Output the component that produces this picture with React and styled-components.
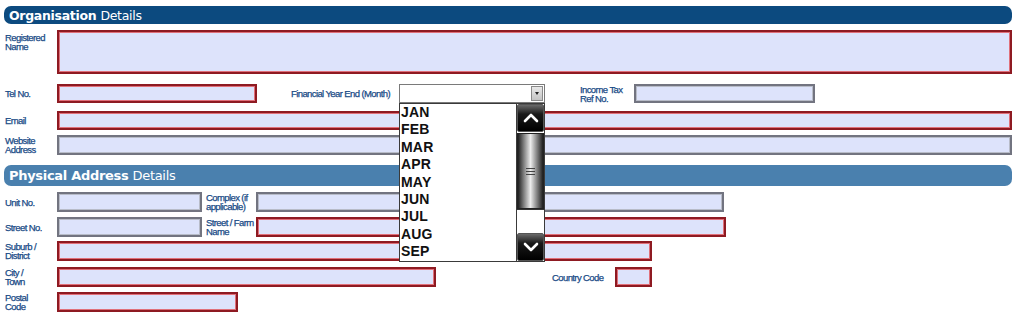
import styled, { createGlobalStyle } from "styled-components";

const GlobalStyle = createGlobalStyle`
  html, body {
    margin: 0;
    padding: 0;
    background: #ffffff;
  }
  body {
    font-family: "Liberation Sans", Arial, sans-serif;
  }
`;

const months = ["JAN", "FEB", "MAR", "APR", "MAY", "JUN", "JUL", "AUG", "SEP"];

const Page = styled.div`
  width: 1024px;
  height: 319px;
  overflow: hidden;
  padding-top: 6px;
  box-sizing: border-box;
  display: flex;
  flex-direction: column;
`;

const SectionHeader = styled.div`
  margin: ${(p) => p.$top || 0}px 0 0 4px;
  width: 1008px;
  height: ${(p) => p.$height}px;
  background: ${(p) => p.$color};
  border-radius: 7px;
  display: flex;
  align-items: center;
  padding-left: 5px;
  box-sizing: border-box;
  color: #ffffff;
  font-family: "DejaVu Sans", Verdana, sans-serif;
  font-size: ${(p) => p.$size || 12.5}px;
  letter-spacing: -0.3px;

  b {
    font-weight: 700;
    margin-right: 4px;
  }
`;

const Row = styled.div`
  display: flex;
  align-items: ${(p) => (p.$top ? "flex-start" : "center")};
  margin-top: ${(p) => p.$gap}px;
  padding-left: 5px;
`;

const Label = styled.div`
  width: ${(p) => p.$w}px;
  margin-left: ${(p) => p.$ml || 0}px;
  padding-top: ${(p) => p.$pt || 0}px;
  flex-shrink: 0;
  color: #184a86;
  font-family: "Liberation Sans", Arial, sans-serif;
  font-size: 9.5px;
  line-height: 9px;
  letter-spacing: -0.6px;
  -webkit-text-stroke: 0.25px #184a86;
  white-space: ${(p) => (p.$nowrap ? "nowrap" : "normal")};
`;

const Field = styled.div`
  width: ${(p) => p.$w}px;
  height: ${(p) => p.$h || 20}px;
  margin-left: ${(p) => p.$ml || 0}px;
  flex-shrink: 0;
  box-sizing: border-box;
  background: #dde3fb;
  border: 2px solid ${(p) => (p.$required ? "#8e1a22" : "#727480")};
  box-shadow: ${(p) =>
    p.$required ? "inset 0 0 0 1px #e0707a" : "inset 0 0 0 1px #b8bcc8"};
`;

const SelectWrap = styled.div`
  position: relative;
  width: 146px;
  height: 19px;
  margin-left: ${(p) => p.$ml}px;
  flex-shrink: 0;
`;

const SelectBox = styled.div`
  width: 100%;
  height: 100%;
  box-sizing: border-box;
  background: #ffffff;
  border: 1px solid #7a7a7a;
  display: flex;
  justify-content: flex-end;
  padding: 1px;
`;

const SelectArrow = styled.div`
  width: 12px;
  height: 100%;
  box-sizing: border-box;
  background: linear-gradient(#e8e8e8, #c4c4c4);
  border: 1px solid #8a8a8a;
  display: flex;
  align-items: center;
  justify-content: center;

  &::after {
    content: "";
    border-left: 2.5px solid transparent;
    border-right: 2.5px solid transparent;
    border-top: 3px solid #222;
  }
`;

const DropList = styled.div`
  position: absolute;
  top: 19px;
  left: 0;
  width: 146px;
  height: 159px;
  box-sizing: border-box;
  background: #ffffff;
  border: 1px solid #3a3a3a;
  display: flex;
  z-index: 5;
`;

const Options = styled.div`
  flex: 1;
  padding-top: 0;
`;

const Option = styled.div`
  height: 17.4px;
  line-height: 17.4px;
  font-family: "Liberation Sans", Arial, sans-serif;
  font-weight: 700;
  font-size: 14px;
  letter-spacing: 0.2px;
  color: #111111;
  padding-left: 1px;
`;

const Scrollbar = styled.div`
  width: 27px;
  display: flex;
  flex-direction: column;
  border-left: 1px solid #3a3a3a;
`;

const ScrollButton = styled.div`
  height: 28px;
  box-sizing: border-box;
  border: 1px solid #555;
  border-radius: 2px;
  background: linear-gradient(#6a6a6a 0%, #1a1a1a 35%, #000 100%);
  display: flex;
  align-items: center;
  justify-content: center;
`;

const Thumb = styled.div`
  height: 76px;
  box-sizing: border-box;
  margin-top: 1px;
  border: 1px solid #222;
  background: linear-gradient(
    90deg,
    #1e1e1e 0%,
    #7a7a7a 22%,
    #ececec 50%,
    #7a7a7a 78%,
    #1e1e1e 100%
  );
  display: flex;
  flex-direction: column;
  align-items: center;
  justify-content: center;
  gap: 2px;

  span {
    width: 9px;
    height: 1px;
    background: #444;
  }
`;

const Track = styled.div`
  flex: 1;
  background: #ffffff;
  border-top: 1px solid #333;
`;

const Chevron = ({ up }) => (
  <svg width="16" height="10" viewBox="0 0 16 10">
    <polyline
      points={up ? "2,8 8,2 14,8" : "2,2 8,8 14,2"}
      fill="none"
      stroke="#ffffff"
      strokeWidth="2.6"
      strokeLinecap="round"
      strokeLinejoin="round"
    />
  </svg>
);

const App = () => {
  return (
    <>
      <GlobalStyle />
      <Page>
        <SectionHeader $color="#0c4a7f" $height={18}>
          <b>Organisation</b>Details
        </SectionHeader>

        <Row $gap={6} $top>
          <Label $w={52} $pt={3}>
            Registered Name
          </Label>
          <Field $w={955} $h={44} $required />
        </Row>

        <Row $gap={10}>
          <Label $w={52}>Tel No.</Label>
          <Field $w={200} $h={19} $required />
          <Label $w={104} $ml={34} $nowrap>
            Financial Year End (Month)
          </Label>
          <SelectWrap $ml={4}>
            <SelectBox>
              <SelectArrow />
            </SelectBox>
            <DropList>
              <Options>
                {months.map((m) => (
                  <Option key={m}>{m}</Option>
                ))}
              </Options>
              <Scrollbar>
                <ScrollButton>
                  <Chevron up />
                </ScrollButton>
                <Thumb>
                  <span />
                  <span />
                  <span />
                </Thumb>
                <Track />
                <ScrollButton>
                  <Chevron />
                </ScrollButton>
              </Scrollbar>
            </DropList>
          </SelectWrap>
          <Label $w={50} $ml={35}>
            Income Tax Ref No.
          </Label>
          <Field $w={181} $h={19} $ml={4} />
        </Row>

        <Row $gap={8}>
          <Label $w={52}>Email</Label>
          <Field $w={955} $h={19} $required />
        </Row>

        <Row $gap={5}>
          <Label $w={52}>Website Address</Label>
          <Field $w={955} $h={20} />
        </Row>

        <SectionHeader $color="#4a80ae" $height={21} $top={10} $size={13}>
          <b>Physical Address</b>Details
        </SectionHeader>

        <Row $gap={6}>
          <Label $w={52}>Unit No.</Label>
          <Field $w={145} />
          <Label $w={50} $ml={4}>
            Complex (if applicable)
          </Label>
          <Field $w={468} />
        </Row>

        <Row $gap={5}>
          <Label $w={52}>Street No.</Label>
          <Field $w={145} />
          <Label $w={50} $ml={4} $nowrap>
            Street / Farm
            <br />
            Name
          </Label>
          <Field $w={470} $required />
        </Row>

        <Row $gap={4}>
          <Label $w={52}>
            Suburb /<br />
            District
          </Label>
          <Field $w={595} $required />
        </Row>

        <Row $gap={6}>
          <Label $w={52}>
            City /<br />
            Town
          </Label>
          <Field $w={379} $required />
          <Label $w={60} $ml={116} $nowrap>
            Country Code
          </Label>
          <Field $w={37} $ml={3} $required />
        </Row>

        <Row $gap={5}>
          <Label $w={52}>
            Postal
            <br />
            Code
          </Label>
          <Field $w={181} $required />
        </Row>
      </Page>
    </>
  );
};

export default App;
